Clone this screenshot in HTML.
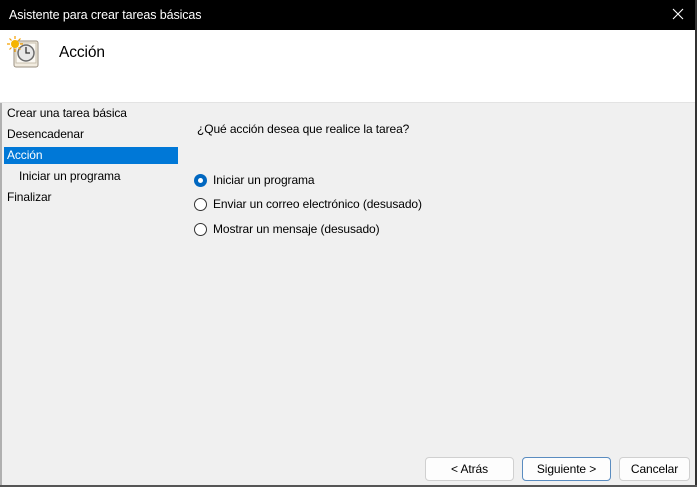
<!DOCTYPE html>
<html><head><meta charset="utf-8"><style>
*{margin:0;padding:0;box-sizing:border-box}
body{width:697px;height:487px;overflow:hidden;background:#f0f0f0;font-family:"Liberation Sans",sans-serif;font-size:12px;letter-spacing:-0.1px;color:#000;position:relative}
.title{position:absolute;left:0;top:0;width:697px;height:30px;background:#000;color:#fff;font-size:12.5px}
.title span{position:absolute;left:9px;top:8px}
.x{position:absolute;left:672px;top:8px}
.head{position:absolute;left:0;top:30px;width:695px;height:73px;background:#fff;border-bottom:1px solid #e3e3e3}
.head .t{position:absolute;left:59px;top:14px;font-size:15.5px}
.rb{position:absolute;left:695px;top:0;width:2px;height:487px;background:#333}
.lb{position:absolute;left:0;top:103px;width:2px;height:384px;background:#b0b0b0}
.bb{position:absolute;left:0;top:485px;width:697px;height:2px;background:#555}
.nav div{position:absolute;left:7px;font-size:12px}
.sel{position:absolute;left:4px;top:147px;width:174px;height:17px;background:#0078d7}
.q{position:absolute;left:197px;top:122px}
.r{position:absolute;left:194px}
.r i{position:absolute;left:0;top:0;width:13px;height:13px;border:1px solid #333;border-radius:50%;background:#fff}
.r i.on{border:none;background:#0067c0}
.r i.on:after{content:"";position:absolute;left:4px;top:4px;width:5px;height:5px;border-radius:50%;background:#fff}
.r span{position:absolute;left:19px;top:-1px;white-space:nowrap}
.btn{position:absolute;top:457px;height:24px;border:1px solid #d0d0d0;border-radius:4px;background:#fdfdfd;text-align:center;line-height:22px}
</style></head><body>
<div class="title"><span>Asistente para crear tareas básicas</span>
<svg class="x" width="12" height="12" viewBox="0 0 12 12"><path d="M1 1L11 11M11 1L1 11" stroke="#fff" stroke-width="1.1"/></svg></div>
<div class="head">
<svg style="position:absolute;left:6px;top:5px" width="34" height="34" viewBox="0 0 34 34">
<rect x="8" y="6" width="24" height="26" rx="2" fill="#f2ece0" stroke="#9a8f80"/>
<rect x="10" y="8" width="20" height="20" fill="#fbf8f2" stroke="#c8bfae"/>
<circle cx="20" cy="18" r="8" fill="#e8e8e8" stroke="#6a6a6a" stroke-width="1.5"/>
<path d="M20 12V18H24" stroke="#333" stroke-width="1.3" fill="none"/>
<circle cx="9" cy="9" r="4" fill="#f5b400"/>
<path d="M9 1V4M9 14V17M1 9H4M14 9H17M3.5 3.5L5.5 5.5M12.5 12.5L14.5 14.5M3.5 14.5L5.5 12.5M12.5 5.5L14.5 3.5" stroke="#f5a000" stroke-width="1.2"/>
</svg>
<div class="t">Acción</div></div>
<div class="lb"></div><div class="rb"></div><div class="bb"></div>
<div class="sel"></div>
<div class="nav">
<div style="top:106px">Crear una tarea básica</div>
<div style="top:127px">Desencadenar</div>
<div style="top:148px;color:#fff">Acción</div>
<div style="top:169px;left:19px">Iniciar un programa</div>
<div style="top:190px">Finalizar</div>
</div>
<div class="q">¿Qué acción desea que realice la tarea?</div>
<div class="r" style="top:174px"><i class="on"></i><span>Iniciar un programa</span></div>
<div class="r" style="top:198px"><i></i><span>Enviar un correo electrónico (desusado)</span></div>
<div class="r" style="top:223px"><i></i><span>Mostrar un mensaje (desusado)</span></div>
<div class="btn" style="left:425px;width:89px">&lt; Atrás</div>
<div class="btn" style="left:522px;width:89px;border-color:#5a8cc0">Siguiente &gt;</div>
<div class="btn" style="left:619px;width:71px">Cancelar</div>
</body></html>
